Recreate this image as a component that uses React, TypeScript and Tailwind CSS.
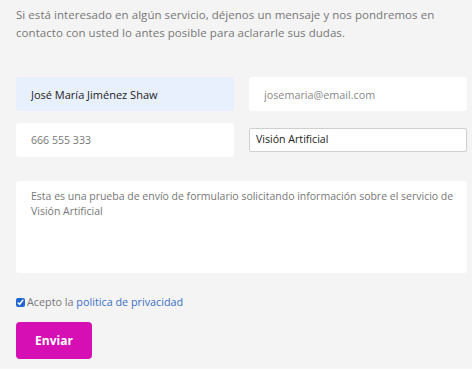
import { useState } from "react";

export default function App() {
  const [accepted, setAccepted] = useState(true);

  return (
    <div className="w-[474px] h-[371px] bg-white font-['Open_Sans',sans-serif]">
      <div className="w-[472px] h-[369px] bg-[#f4f4f4] pl-4 pr-[5px] pt-[6px]">
        <p className="text-[11.5px] leading-[18px] text-[#777] tracking-[0.05px]">
          Si está interesado en algún servicio, déjenos un mensaje y nos pondremos en contacto con usted lo antes
          posible para aclararle sus dudas.
        </p>

        <form className="mt-[35px]" onSubmit={(e) => e.preventDefault()}>
          <div className="grid grid-cols-2 gap-x-[15px] gap-y-[12px]">
            <input
              defaultValue="José María Jiménez Shaw"
              className="h-[34px] min-w-0 rounded-[3px] bg-[#e8f0fe] px-[15px] text-[11px] font-medium text-[#222] focus:outline-none"
            />
            <input
              placeholder="josemaria@email.com"
              className="h-[34px] min-w-0 rounded-[3px] bg-white px-[15px] text-[10.8px] text-[#444] placeholder:text-[#8a8a8a] focus:outline-none"
            />
            <input
              defaultValue="666 555 333"
              className="h-[34px] min-w-0 rounded-[3px] bg-white px-[15px] text-[10.6px] text-[#777] focus:outline-none"
            />
            <div className="flex items-center">
              <div className="flex h-[24px] w-full items-center rounded-[2px] border border-[#cfcfcf] bg-white px-[6px] text-[10.6px] font-medium text-[#222]">
                Visión Artificial
              </div>
            </div>
          </div>

          <textarea
            defaultValue="Esta es una prueba de envío de formulario solicitando información sobre el servicio de Visión Artificial"
            className="mt-[24px] block h-[92px] w-full resize-none rounded-[3px] bg-white pl-[15px] pr-[12px] py-[8px] text-[10.5px] leading-[15px] text-[#777] focus:outline-none"
          />

          <label className="mt-[21px] flex h-[16px] items-center gap-[2px] text-[10.8px] text-[#777]">
            <input
              type="checkbox"
              checked={accepted}
              onChange={(e) => setAccepted(e.target.checked)}
              className="m-0 h-[9px] w-[9px] accent-[#2166d0]"
            />
            <span>
              Acepto la <a href="#" className="text-[#3b6fc4]">politica de privacidad</a>
            </span>
          </label>

          <button
            type="submit"
            className="mt-[12px] h-[37px] w-[76px] rounded-[4px] bg-[#d50fb4] text-[12px] font-bold text-white"
          >
            Enviar
          </button>
        </form>
      </div>
    </div>
  );
}
